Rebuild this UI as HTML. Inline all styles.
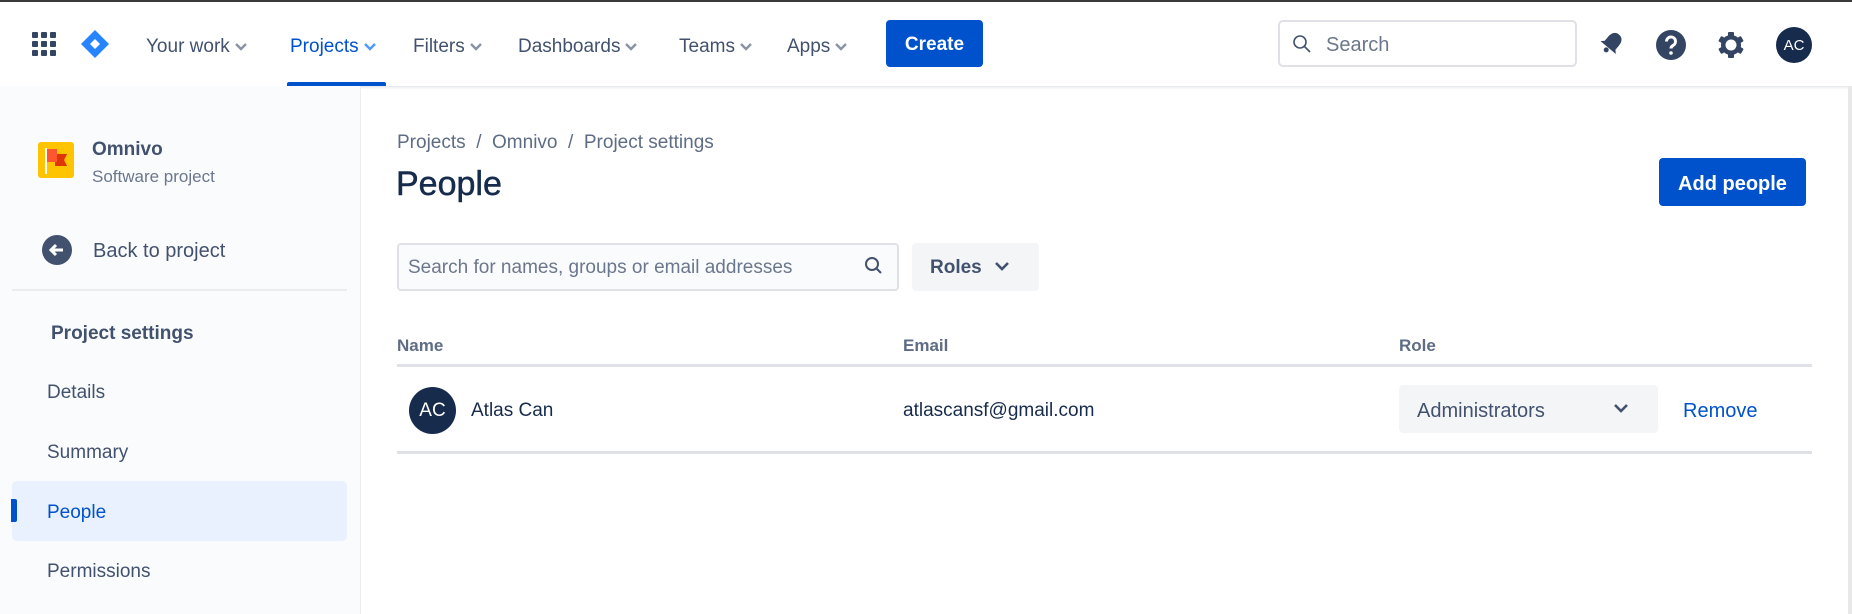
<!DOCTYPE html>
<html><head><meta charset="utf-8"><style>
*{box-sizing:border-box;margin:0;padding:0}
body{width:1852px;height:614px;overflow:hidden;background:#fff;font-family:"Liberation Sans",sans-serif;color:#172b4d;position:relative}
.a{position:absolute;white-space:nowrap}
.nav{font-size:19px;color:#42526e;top:36px}
.nav svg{margin-left:4px;vertical-align:middle}
.side{font-size:19px;color:#42526e}
</style></head><body>
<div class="a" style="left:0;top:0;width:1852px;height:2px;background:#3b3b3b"></div>
<div class="a" style="left:0;top:2px;width:1852px;height:84px;background:#fff;box-shadow:0 1px 3px rgba(9,30,66,.15)"></div>
<svg class="a" style="left:32px;top:32px" width="24" height="24" viewBox="0 0 24 24" fill="#344563">
<rect x="0" y="0" width="6" height="6" rx="1"/><rect x="9" y="0" width="6" height="6" rx="1"/><rect x="18" y="0" width="6" height="6" rx="1"/>
<rect x="0" y="9" width="6" height="6" rx="1"/><rect x="9" y="9" width="6" height="6" rx="1"/><rect x="18" y="9" width="6" height="6" rx="1"/>
<rect x="0" y="18" width="6" height="6" rx="1"/><rect x="9" y="18" width="6" height="6" rx="1"/><rect x="18" y="18" width="6" height="6" rx="1"/></svg>
<svg class="a" style="left:80px;top:29px" width="30" height="30" viewBox="0 0 30 30"><path d="M15 1 L29 15 L15 29 L1 15Z" fill="#2684ff"/><path d="M15 10 L20 15 L15 20 L10 15Z" fill="#fff"/></svg>
<div class="a nav" style="left:146px">Your work<svg width="14" height="10" viewBox="0 0 14 10"><path d="M2 2l5 5 5-5" stroke="#8993a4" stroke-width="2.4" fill="none"/></svg></div>
<div class="a nav" style="left:290px;color:#0052cc">Projects<svg width="14" height="10" viewBox="0 0 14 10"><path d="M2 2l5 5 5-5" stroke="#4c9aff" stroke-width="2.4" fill="none"/></svg></div>
<div class="a" style="left:287px;top:82px;width:99px;height:4px;background:#0052cc;border-radius:2px 2px 0 0"></div>
<div class="a nav" style="left:413px">Filters<svg width="14" height="10" viewBox="0 0 14 10"><path d="M2 2l5 5 5-5" stroke="#8993a4" stroke-width="2.4" fill="none"/></svg></div>
<div class="a nav" style="left:518px">Dashboards<svg width="14" height="10" viewBox="0 0 14 10"><path d="M2 2l5 5 5-5" stroke="#8993a4" stroke-width="2.4" fill="none"/></svg></div>
<div class="a nav" style="left:679px">Teams<svg width="14" height="10" viewBox="0 0 14 10"><path d="M2 2l5 5 5-5" stroke="#8993a4" stroke-width="2.4" fill="none"/></svg></div>
<div class="a nav" style="left:787px">Apps<svg width="14" height="10" viewBox="0 0 14 10"><path d="M2 2l5 5 5-5" stroke="#8993a4" stroke-width="2.4" fill="none"/></svg></div>
<div class="a" style="left:886px;top:20px;width:97px;height:47px;background:#0052cc;border-radius:4px;color:#fff;font-size:19px;font-weight:bold;text-align:center;line-height:50px">Create</div>
<div class="a" style="left:1278px;top:20px;width:299px;height:47px;border:2px solid #dfe1e6;border-radius:5px;background:#fff"></div>
<svg class="a" style="left:1292px;top:34px" width="20" height="20" viewBox="0 0 20 20"><circle cx="8" cy="8" r="6" stroke="#42526e" stroke-width="1.6" fill="none"/><path d="M12.5 12.5L18 18" stroke="#42526e" stroke-width="1.6"/></svg>
<div class="a" style="left:1326px;top:34px;font-size:20px;color:#6b778c">Search</div>
<svg class="a" style="left:1598px;top:29px" width="28" height="28" viewBox="0 0 28 28"><g transform="rotate(40 14 14)" fill="#344563"><path d="M14 3c-5 0-7 4-7 9v5l-3 3h20l-3-3v-5c0-5-2-9-7-9z"/><circle cx="14" cy="23" r="2.5"/></g></svg>
<svg class="a" style="left:1656px;top:30px" width="30" height="30" viewBox="0 0 30 30"><circle cx="15" cy="15" r="15" fill="#344563"/><path d="M10.5 11.5a4.5 4.5 0 1 1 6.5 4c-1.5.8-2 1.5-2 3" stroke="#fff" stroke-width="3" fill="none"/><circle cx="15" cy="23" r="1.8" fill="#fff"/></svg>
<svg class="a" style="left:1717px;top:31px" width="28" height="28" viewBox="0 0 28 28"><g fill="#344563"><circle cx="14" cy="14" r="10"/><rect x="11" y="1" width="6" height="26" rx="1"/><rect x="11" y="1" width="6" height="26" rx="1" transform="rotate(60 14 14)"/><rect x="11" y="1" width="6" height="26" rx="1" transform="rotate(120 14 14)"/></g><circle cx="14" cy="14" r="5.5" fill="#fff"/></svg>
<div class="a" style="left:1776px;top:27px;width:36px;height:36px;border-radius:50%;background:#172b4d;color:#fff;font-size:15px;text-align:center;line-height:37px">AC</div>
<div class="a" style="left:0;top:86px;width:361px;height:528px;background:#fafbfc;border-right:1px solid #ebecf0"></div>
<svg class="a" style="left:38px;top:142px" width="36" height="36" viewBox="0 0 36 36"><rect width="36" height="36" rx="3" fill="#ffc400"/><rect x="7" y="6" width="2" height="26" fill="#fff"/><path d="M9 7h10v5h10l-3 6 3 6H17v-4H9z" fill="#ff5630"/><path d="M19 12h10l-3 6 3 6H17v-4h2z" fill="#de350b"/></svg>
<div class="a" style="left:92px;top:139px;font-size:19px;font-weight:bold;color:#42526e">Omnivo</div>
<div class="a" style="left:92px;top:167px;font-size:17px;color:#6b778c">Software project</div>
<svg class="a" style="left:42px;top:235px" width="30" height="30" viewBox="0 0 30 30"><circle cx="15" cy="15" r="15" fill="#42526e"/><path d="M21 15H9m5-5l-5 5 5 5" stroke="#fff" stroke-width="3" fill="none"/></svg>
<div class="a side" style="left:93px;top:240px;font-size:20px">Back to project</div>
<div class="a" style="left:12px;top:289px;width:335px;height:2px;background:#ebecf0"></div>
<div class="a" style="left:51px;top:323px;font-size:19px;font-weight:bold;color:#42526e">Project settings</div>
<div class="a side" style="left:47px;top:382px">Details</div>
<div class="a side" style="left:47px;top:442px">Summary</div>
<div class="a" style="left:12px;top:481px;width:335px;height:60px;background:#e8f1fd;border-radius:5px"></div>
<div class="a" style="left:11px;top:499px;width:6px;height:23px;background:#0052cc;border-radius:0 2px 2px 0"></div>
<div class="a side" style="left:47px;top:502px;color:#0052cc">People</div>
<div class="a side" style="left:47px;top:561px">Permissions</div>
<div class="a" style="left:1848px;top:86px;width:4px;height:528px;background:#e8e8e8"></div>
<div class="a" style="left:397px;top:132px;font-size:19px;color:#5e6c84">Projects &nbsp;/&nbsp; Omnivo &nbsp;/&nbsp; Project settings</div>
<div class="a" style="left:396px;top:165px;font-size:34px;color:#172b4d;-webkit-text-stroke:0.5px #172b4d">People</div>
<div class="a" style="left:1659px;top:158px;width:147px;height:48px;background:#0052cc;border-radius:4px;color:#fff;font-size:20px;font-weight:bold;text-align:center;line-height:52px">Add people</div>
<div class="a" style="left:397px;top:243px;width:502px;height:48px;border:2px solid #dfe1e6;border-radius:4px;background:#fafbfc"></div>
<div class="a" style="left:408px;top:257px;font-size:19px;color:#6b778c">Search for names, groups or email addresses</div>
<svg class="a" style="left:864px;top:256px" width="20" height="20" viewBox="0 0 20 20"><circle cx="8" cy="8" r="6" stroke="#42526e" stroke-width="2" fill="none"/><path d="M12.5 12.5L17 17" stroke="#42526e" stroke-width="2"/></svg>
<div class="a" style="left:912px;top:243px;width:127px;height:48px;background:#f4f5f7;border-radius:4px"></div>
<div class="a" style="left:930px;top:257px;font-size:19px;color:#42526e;font-weight:bold">Roles</div>
<svg class="a" style="left:993px;top:259px" width="18" height="14" viewBox="0 0 18 14"><path d="M3 4l6 6 6-6" stroke="#42526e" stroke-width="2.6" fill="none"/></svg>
<div class="a" style="left:397px;top:336px;font-size:17px;font-weight:bold;color:#5e6c84">Name</div>
<div class="a" style="left:903px;top:336px;font-size:17px;font-weight:bold;color:#5e6c84">Email</div>
<div class="a" style="left:1399px;top:336px;font-size:17px;font-weight:bold;color:#5e6c84">Role</div>
<div class="a" style="left:397px;top:364px;width:1415px;height:3px;background:#dfe1e6"></div>
<div class="a" style="left:409px;top:387px;width:47px;height:47px;border-radius:50%;background:#172b4d;color:#fff;font-size:19px;text-align:center;line-height:48px">AC</div>
<div class="a" style="left:471px;top:400px;font-size:19px">Atlas Can</div>
<div class="a" style="left:903px;top:400px;font-size:19px">atlascansf@gmail.com</div>
<div class="a" style="left:1399px;top:385px;width:259px;height:48px;background:#f4f5f7;border-radius:4px"></div>
<div class="a" style="left:1417px;top:400px;font-size:20px;color:#42526e">Administrators</div>
<svg class="a" style="left:1612px;top:402px" width="18" height="14" viewBox="0 0 18 14"><path d="M3 3l6 6 6-6" stroke="#42526e" stroke-width="2.6" fill="none"/></svg>
<div class="a" style="left:1683px;top:400px;font-size:20px;color:#0052cc">Remove</div>
<div class="a" style="left:397px;top:451px;width:1415px;height:3px;background:#dfe1e6"></div>
</body></html>
